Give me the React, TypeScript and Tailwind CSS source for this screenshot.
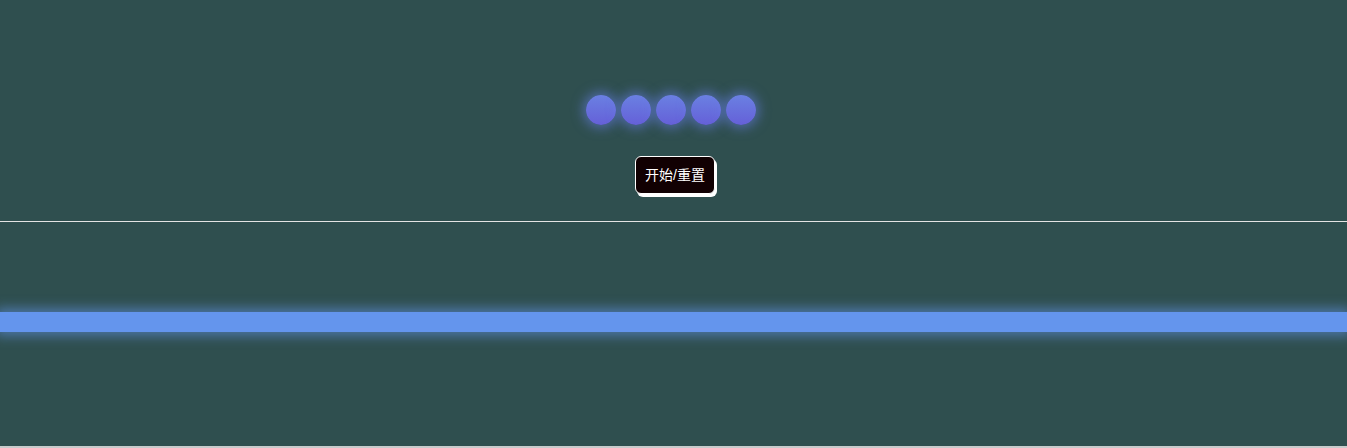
import React from "react";

const dots = [0, 1, 2, 3, 4];

export default function App() {
  return (
    <div className="min-h-[448px] w-full bg-[#2f4f4f] font-['Liberation_Sans','Noto_Sans_CJK_SC',sans-serif]">
      {/* Loader dots + control */}
      <div className="flex h-[221px] flex-col items-center pt-[95px]">
        <div className="mr-[6px] flex gap-[5px]">
          {dots.map((i) => (
            <span
              key={i}
              className="h-[30px] w-[30px] rounded-full bg-gradient-to-b from-[#6a80e2] to-[#6560d8] shadow-[0_0_12px_3px_rgba(105,130,240,0.55)]"
            />
          ))}
        </div>
        <button className="ml-[3px] mt-[31px] rounded-[6px] border border-white bg-[#110002] px-[9px] py-[8px] text-[14px] leading-[20px] text-white shadow-[2px_3px_0_0_#ffffff]">
          开始/重置
        </button>
      </div>

      <div className="h-px bg-[#e4e4e4]" />

      {/* Progress track */}
      <div className="h-[224px] pt-[90px]">
        <div className="h-[20px] w-full bg-[#6495ed] shadow-[0_0_12px_4px_rgba(100,149,237,0.55)]" />
      </div>

      <div className="h-[2px] bg-[#c8cccc]" />
    </div>
  );
}
